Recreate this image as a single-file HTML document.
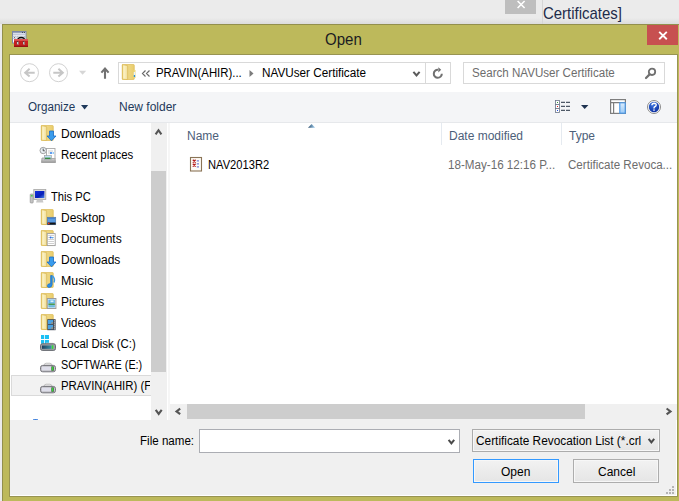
<!DOCTYPE html>
<html><head><meta charset="utf-8">
<style>
*{margin:0;padding:0;box-sizing:border-box}
html,body{width:679px;height:501px;overflow:hidden;background:#ebebeb;font-family:"Liberation Sans",sans-serif;font-size:12px;color:#000}
.a{position:absolute}
.t{position:absolute;white-space:nowrap;line-height:12px;font-size:12px}
</style></head><body>

<svg width="0" height="0" style="position:absolute">
<defs>
<linearGradient id="gFront" x1="0" y1="0" x2="1" y2="0"><stop offset="0" stop-color="#f2dc8c"/><stop offset="0.3" stop-color="#fbf2c6"/><stop offset="1" stop-color="#f1de98"/></linearGradient>
<linearGradient id="gBack" x1="0" y1="0" x2="1" y2="0"><stop offset="0" stop-color="#f4e09a"/><stop offset="1" stop-color="#e9cd6c"/></linearGradient>
<symbol id="fld" viewBox="0 0 16 16">
 <rect x="1.4" y="0.4" width="11.8" height="15.2" rx="0.8" fill="url(#gBack)" stroke="#e0c162" stroke-width="0.9"/>
 <path d="M1.4 0.6 L6.6 1.6 L6.6 15.6 L1.4 15.2 Z" fill="url(#gFront)" stroke="#dcbb58" stroke-width="0.8"/>
 <path d="M7.2 2 V15" stroke="#e6cf7e" stroke-width="0.8"/>
</symbol>
</defs></svg>
<!-- background window bits -->
<div class="a" style="left:0;top:18px;width:679px;height:6px;background:linear-gradient(#ebebeb,#dcdcdc)"></div>
<div class="a" style="left:505px;top:0;width:31px;height:14px;background:#bebebe"></div>
<div class="a" style="left:542px;top:0;width:1px;height:24px;background:#d6d6d6"></div>
<div class="t" style="transform:scaleX(0.88);transform-origin:0 0;left:543px;top:5px;font-size:17px;line-height:17px;color:#1e2c4a">Certificates]</div>

<!-- dialog frame -->
<div class="a" style="left:2px;top:24px;width:700px;height:500px;background:#bdb95b;border-left:1px solid #928f4c;border-top:1px solid #928f4c"></div>
<div class="t" style="left:325px;top:32px;font-size:16px;line-height:16px;color:#1b1b22;transform:scaleX(0.94);transform-origin:0 0">Open</div>
<div class="a" style="left:647px;top:25px;width:31px;height:20px;background:#c75050"></div>

<!-- content -->
<div class="a" style="left:9px;top:54px;width:669px;height:443px;border:1px solid #989452;background:#fff"></div>
<!-- nav bar -->
<div class="a" style="left:118px;top:62px;width:333px;height:22px;border:1px solid #d9d9d9"></div>
<div class="a" style="left:425px;top:62px;width:1px;height:22px;background:#d9d9d9"></div>
<div class="a" style="left:463px;top:62px;width:202px;height:22px;border:1px solid #d9d9d9"></div>
<div class="t" style="transform:scaleX(0.948);transform-origin:0 0;left:156px;top:67px;">PRAVIN(AHIR)...</div>
<div class="t" style="transform:scaleX(0.977);transform-origin:0 0;left:262px;top:67px;">NAVUser Certificate</div>
<div class="t" style="transform:scaleX(0.966);transform-origin:0 0;left:472px;top:67px;color:#6d6d6d">Search NAVUser Certificate</div>

<!-- toolbar -->
<div class="a" style="left:10px;top:92px;width:667px;height:31px;background:#f4f5f7;border-bottom:1px solid #e6e8eb"></div>
<div class="t" style="left:28px;top:101px;color:#1e395b;transform:scaleX(0.97);transform-origin:0 0">Organize</div>
<div class="t" style="left:119px;top:101px;color:#1e395b">New folder</div>

<!-- left pane -->
<div class="a" style="left:151px;top:123px;width:16px;height:297px;background:#f0f0f0"></div>
<div class="a" style="left:151px;top:171px;width:15px;height:201px;background:#cdcdcd"></div>
<div class="a" style="left:11px;top:375px;width:140px;height:21px;background:#f2f2f2;border:1px solid #dadada;border-right:none"></div>
<div class="t" style="left:61px;top:128px">Downloads</div>
<div class="t" style="transform:scaleX(0.95);transform-origin:0 0;left:61px;top:149px">Recent places</div>
<div class="t" style="transform:scaleX(0.93);transform-origin:0 0;left:51px;top:191px">This PC</div>
<div class="t" style="left:61px;top:212px">Desktop</div>
<div class="t" style="left:61px;top:233px">Documents</div>
<div class="t" style="left:61px;top:254px">Downloads</div>
<div class="t" style="transform:scaleX(1.03);transform-origin:0 0;left:61px;top:275px">Music</div>
<div class="t" style="left:61px;top:296px">Pictures</div>
<div class="t" style="transform:scaleX(0.96);transform-origin:0 0;left:61px;top:317px">Videos</div>
<div class="t" style="transform:scaleX(0.95);transform-origin:0 0;left:61px;top:338px">Local Disk (C:)</div>
<div class="t" style="transform:scaleX(0.9);transform-origin:0 0;left:61px;top:359px">SOFTWARE (E:)</div>
<div class="a" style="left:61px;top:376px;width:89px;height:20px;overflow:hidden"><div class="t" style="transform:scaleX(0.948);transform-origin:0 0;left:0;top:4px">PRAVIN(AHIR) (F:)</div></div>
<div class="a" style="left:168px;top:123px;width:2px;height:297px;background:#f6f6f6"></div>

<!-- right pane -->
<div class="t" style="left:187px;top:130px;color:#4c607a">Name</div>
<div class="t" style="left:449px;top:130px;color:#4c607a">Date modified</div>
<div class="t" style="left:569px;top:130px;color:#4c607a">Type</div>
<div class="a" style="left:441px;top:123px;width:1px;height:22px;background:#e5eaf0"></div>
<div class="a" style="left:561px;top:123px;width:1px;height:22px;background:#e5eaf0"></div>
<div class="t" style="transform:scaleX(0.93);transform-origin:0 0;left:208px;top:159px">NAV2013R2</div>
<div class="t" style="transform:scaleX(0.97);transform-origin:0 0;left:448px;top:159px;color:#6d6d6d">18-May-16 12:16 P...</div>
<div class="t" style="transform:scaleX(0.965);transform-origin:0 0;left:568px;top:159px;color:#6d6d6d">Certificate Revoca...</div>

<!-- h scrollbar -->
<div class="a" style="left:170px;top:404px;width:507px;height:16px;background:#f0f0f0"></div>
<div class="a" style="left:187px;top:404px;width:398px;height:15px;background:#cdcdcd"></div>

<!-- bottom panel -->
<div class="a" style="left:10px;top:420px;width:667px;height:76px;background:#f0f0f0;border-right:1px solid #fff;border-bottom:1px solid #fff"></div>
<div class="t" style="transform:scaleX(0.965);transform-origin:0 0;left:140px;top:435px">File name:</div>
<div class="a" style="left:199px;top:429px;width:261px;height:24px;background:#fff;border:1px solid #abadb3"></div>
<div class="a" style="left:472px;top:429px;width:188px;height:23px;background:linear-gradient(#f2f2f2,#e5e5e5);box-shadow:inset 0 0 0 1px #f7f7f7;border:1px solid #acacac"></div>
<div class="t" style="transform:scaleX(0.987);transform-origin:0 0;left:476px;top:435px">Certificate Revocation List (*.crl</div>
<div class="a" style="left:473px;top:459px;width:86px;height:24px;background:linear-gradient(#f2f2f2,#e5e5e5);box-shadow:inset 0 0 0 1px #f7f7f7;border:1px solid #3399ff"></div>
<div class="t" style="left:501px;top:466px">Open</div>
<div class="a" style="left:573px;top:459px;width:86px;height:24px;background:linear-gradient(#f2f2f2,#e5e5e5);box-shadow:inset 0 0 0 1px #f7f7f7;border:1px solid #adadad"></div>
<div class="t" style="left:598px;top:466px">Cancel</div>

<!-- ICONS -->
<!-- top gray X -->
<svg class="a" style="left:505px;top:0" width="31" height="14"><path d="M12.6 1 L19.6 8 M19.6 1 L12.6 8" stroke="#fff" stroke-width="1.6"/></svg>
<!-- title icon -->
<svg class="a" style="left:11px;top:30px" width="19" height="18">
 <rect x="1.5" y="1.5" width="13.5" height="11.5" fill="#f7f8fb" stroke="#7c88a6"/>
 <rect x="2" y="2" width="12.5" height="1.3" fill="#98a2bb"/>
 <rect x="11" y="2" width="1" height="1" fill="#444c60"/><rect x="13" y="2" width="1" height="1" fill="#444c60"/>
 <rect x="2" y="4.2" width="12.5" height="1" fill="#b6bed0"/>
 <rect x="2" y="6.2" width="3" height="2.3" fill="#fff" stroke="#a0a8bc" stroke-width="0.6"/>
 <rect x="3.2" y="7" width="0.8" height="0.8" fill="#222"/>
 <rect x="6.2" y="6.2" width="7.6" height="2.6" fill="#fff" stroke="#a0a8bc" stroke-width="0.6"/>
 <path d="M6.8 8.8 Q10.2 6.2 13.6 8.8" stroke="#0a0a0a" stroke-width="1.3" fill="none"/>
 <rect x="3" y="9" width="14" height="8" fill="#c81e1e"/>
 <rect x="3" y="9" width="14" height="1.8" fill="#de5656"/>
 <rect x="3" y="15.6" width="14" height="1.4" fill="#951212"/>
 <rect x="5.9" y="11.6" width="1.7" height="3" fill="#d4e2e4" stroke="#5a3030" stroke-width="0.4"/>
 <rect x="12" y="11.6" width="1.7" height="3" fill="#d4e2e4" stroke="#5a3030" stroke-width="0.4"/>
</svg>
<!-- close X -->
<svg class="a" style="left:647px;top:25px" width="31" height="20"><path d="M12.2 6.9 L19.8 14.3 M19.8 6.9 L12.2 14.3" stroke="#fff" stroke-width="1.9"/></svg>

<!-- nav buttons -->
<svg class="a" style="left:18px;top:61px" width="100" height="24">
 <circle cx="11.5" cy="11.7" r="9" fill="none" stroke="#d2d2d2" stroke-width="1"/>
 <path d="M7 11.7 H16.7 M11.6 7.8 L7.2 11.7 L11.6 15.6" fill="none" stroke="#c6c6c6" stroke-width="2"/>
 <circle cx="40.5" cy="11.7" r="9" fill="none" stroke="#d2d2d2" stroke-width="1"/>
 <path d="M35.3 11.7 H45 M40.4 7.8 L44.8 11.7 L40.4 15.6" fill="none" stroke="#c6c6c6" stroke-width="2"/>
 <path d="M61 9.8 H68.2 L64.6 13.8 Z" fill="#d6d6d6"/>
 <path d="M87 17.8 V7.4 M83.4 11.6 L87 7.6 L90.6 11.6" fill="none" stroke="#727272" stroke-width="2.1"/>
</svg>
<!-- address folder -->
<svg class="a" style="left:121px;top:64px" width="16" height="16"><use href="#fld"/><rect x="12.5" y="6" width="2" height="8" fill="#eed77c"/><rect x="12.8" y="8" width="1.3" height="4.6" fill="#e8f2f8"/><rect x="12.8" y="11" width="1.3" height="2" fill="#2c8fd8"/></svg>
<!-- << and > -->
<svg class="a" style="left:140px;top:68px" width="12" height="12"><path d="M5.5 2.5 L2.5 5.5 L5.5 8.5 M9.5 2.5 L6.5 5.5 L9.5 8.5" fill="none" stroke="#6a6a6a" stroke-width="1.2"/></svg>
<svg class="a" style="left:246.5px;top:68px" width="10" height="12"><path d="M2.5 2 L6.5 5.5 L2.5 9 Z" fill="#7c7c7c"/></svg>
<!-- address dropdown chevron -->
<svg class="a" style="left:411px;top:69px" width="12" height="10"><path d="M2.4 2.8 L5.5 6.4 L8.6 2.8" fill="none" stroke="#5a5a5a" stroke-width="2"/></svg>
<!-- refresh -->
<svg class="a" style="left:430px;top:65px" width="16" height="16">
 <path d="M11.8 8.8 A4 4 0 1 1 8 4.8" fill="none" stroke="#707070" stroke-width="2"/>
 <path d="M8.3 2.2 L11.2 4.8 L8.3 7.4 Z" fill="#707070"/>
</svg>
<!-- search -->
<svg class="a" style="left:642px;top:66px" width="16" height="16">
 <circle cx="10" cy="5.8" r="3.2" fill="none" stroke="#707070" stroke-width="1.8"/>
 <path d="M7.6 8.4 L4 12" stroke="#707070" stroke-width="2.2" stroke-linecap="round"/>
</svg>

<!-- toolbar -->
<svg class="a" style="left:80px;top:103px" width="10" height="8"><path d="M1 2 H8.2 L4.6 6.4 Z" fill="#1e395b"/></svg>
<svg class="a" style="left:554px;top:99px" width="36" height="16">
 <rect x="1.5" y="1.5" width="4" height="4" fill="#fff" stroke="#6b7688" stroke-width="0.8"/>
 <rect x="1.5" y="5.5" width="4" height="4" fill="#fff" stroke="#6b7688" stroke-width="0.8"/>
 <rect x="1.5" y="9.5" width="4" height="4" fill="#fff" stroke="#6b7688" stroke-width="0.8"/>
 <rect x="3" y="3" width="1" height="1" fill="#3a9a3a"/>
 <rect x="3" y="7" width="1" height="1" fill="#e02020"/>
 <rect x="3" y="11" width="1" height="1" fill="#2050e0"/>
 <path d="M7 3.4 H11 M12 3.4 H16 M7 7.4 H11 M12 7.4 H16 M7 11.4 H11 M12 11.4 H16" stroke="#4e5866" stroke-width="1.1"/>
 <path d="M27 6 H34.4 L30.7 10 Z" fill="#1e3250"/>
</svg>
<svg class="a" style="left:609px;top:98px" width="18" height="17">
 <rect x="1.6" y="1.6" width="14.8" height="13.8" fill="#fff" stroke="#7e7e7e" stroke-width="1.2"/>
 <path d="M1.6 4.6 H16.4 M4.6 4.6 V15.4" stroke="#7e7e7e" stroke-width="1.2"/>
 <linearGradient id="gPv" x1="0" y1="0" x2="0" y2="1"><stop offset="0" stop-color="#dcecfc"/><stop offset="1" stop-color="#9ccbf6"/></linearGradient>
 <rect x="10.8" y="4.8" width="5.4" height="10.4" fill="url(#gPv)" stroke="#4796e8" stroke-width="1.1"/>
</svg>
<svg class="a" style="left:646px;top:99px" width="16" height="16">
 <defs><radialGradient id="gHelp" cx="0.4" cy="0.3" r="0.8"><stop offset="0" stop-color="#3b74e0"/><stop offset="1" stop-color="#0a2a9a"/></radialGradient></defs>
 <circle cx="8" cy="8" r="6.5" fill="#fff" stroke="#8a8a8a" stroke-width="1"/>
 <circle cx="8" cy="8" r="5.2" fill="url(#gHelp)"/>
 <path d="M5.9 6.2 Q6 4.2 8.1 4.2 Q10.3 4.3 10.2 6 Q10.1 7.2 8.6 7.9 Q8 8.3 8 9.4" fill="none" stroke="#fff" stroke-width="1.4"/>
 <rect x="7.3" y="10.4" width="1.4" height="1.4" fill="#fff"/>
</svg>

<!-- left pane icons -->
<svg class="a" style="left:40px;top:125px" width="17" height="17"><use href="#fld" width="16" height="16"/>
 <path d="M9.5 6 H13.5 V11 H16 L11.5 15.8 L7 11 H9.5 Z" fill="#3a9cec" stroke="#1a6cc8" stroke-width="0.8"/></svg>
<svg class="a" style="left:39px;top:146px" width="18" height="17">
 <linearGradient id="gTray" x1="0" y1="0" x2="0" y2="1"><stop offset="0" stop-color="#dcdcdc"/><stop offset="1" stop-color="#9a9a9a"/></linearGradient>
 <path d="M3 12 H16 L16.5 16.5 H2.5 Z" fill="url(#gTray)" stroke="#8e8e8e" stroke-width="0.7"/>
 <rect x="7.5" y="2.5" width="8.5" height="10" fill="#fff" stroke="#a8a8a8" stroke-width="0.9"/>
 <path d="M9 5 H14 M9 7 H11" stroke="#c0c0c0" stroke-width="0.8"/>
 <circle cx="12" cy="7" r="1" fill="#2a7ae8"/><circle cx="14.2" cy="7" r="0.8" fill="#48a8f0"/>
 <rect x="5.3" y="9.5" width="7" height="4" fill="#bfe0f5" stroke="#999" stroke-width="0.6"/>
 <rect x="6" y="11.6" width="5.6" height="1.4" fill="#3a8a40"/>
 <circle cx="4.2" cy="4.5" r="3.2" fill="#e8eef2" stroke="#9a9a9a" stroke-width="0.9"/>
 <path d="M4.2 2.6 V4.8 H5.8" stroke="#333" stroke-width="0.8" fill="none"/>
</svg>
<svg class="a" style="left:29px;top:188px" width="18" height="16">
 <rect x="4.8" y="1.5" width="12" height="10" fill="#dcdcd8" stroke="#a6a6a6" stroke-width="0.8"/>
 <linearGradient id="gScr" x1="0" y1="0" x2="1" y2="1"><stop offset="0" stop-color="#1030e0"/><stop offset="0.6" stop-color="#0820b8"/><stop offset="1" stop-color="#4b86e8"/></linearGradient>
 <rect x="6" y="3" width="9.4" height="7" fill="url(#gScr)"/>
 <path d="M8 11.5 H13.5 L14.5 14.5 H7 Z" fill="#c8c8c8"/>
 <rect x="1.2" y="6" width="3" height="9" rx="0.8" fill="#c4c4c4" stroke="#8a8a8a" stroke-width="0.6"/>
 <rect x="1.8" y="7.2" width="1.8" height="1.2" fill="#2ed02e"/>
</svg>
<svg class="a" style="left:40px;top:209px" width="17" height="17"><use href="#fld" width="16" height="16"/>
 <rect x="7.3" y="8.3" width="8.4" height="7.4" fill="#3f7fd0" stroke="#587ca8" stroke-width="0.7"/>
 <rect x="7.8" y="9.8" width="7.5" height="3.2" fill="#5a9be0"/>
 <rect x="7.6" y="13.6" width="8" height="2" fill="#151515"/>
 <rect x="8" y="13.6" width="1.6" height="1.6" fill="#e84020"/>
</svg>
<svg class="a" style="left:40px;top:230px" width="17" height="17"><use href="#fld" width="16" height="16"/>
 <rect x="7.2" y="3.6" width="8" height="12" fill="#fff" stroke="#9c9c9c" stroke-width="0.9"/>
 <path d="M8.2 5.5 H14 M8.2 7.5 H14 M8.2 9.5 H14 M8.2 11.5 H14 M8.2 13.5 H14" stroke="#c4c4c4" stroke-width="0.8"/>
 <circle cx="10.6" cy="7.6" r="1" fill="#2a6ee8"/><circle cx="12.6" cy="7.7" r="0.8" fill="#4aa8f4"/>
</svg>
<svg class="a" style="left:40px;top:251px" width="17" height="17"><use href="#fld" width="16" height="16"/>
 <path d="M9.5 6 H13.5 V11 H16 L11.5 15.8 L7 11 H9.5 Z" fill="#3a9cec" stroke="#1a6cc8" stroke-width="0.8"/></svg>
<svg class="a" style="left:40px;top:272px" width="17" height="17"><use href="#fld" width="16" height="16"/>
 <path d="M12.2 3.5 V12.5 Q12 15.5 9 15.6 Q7 15.6 7.4 13.3 Q8 11.4 10.6 11.6 V3.5 Z" fill="#2a8ee8" stroke="#1a6ac0" stroke-width="0.6"/>
 <path d="M12.2 3.8 Q15.6 6.5 14 10.5" fill="none" stroke="#3a9ae8" stroke-width="1.4"/>
</svg>
<svg class="a" style="left:40px;top:293px" width="17" height="17"><use href="#fld" width="16" height="16"/>
 <rect x="7.3" y="5.5" width="8.6" height="10" fill="#f8f8f8" stroke="#9b9b9b" stroke-width="1"/>
 <rect x="8.3" y="6.5" width="6.6" height="4.2" fill="#62b2e8"/>
 <rect x="10.5" y="7.4" width="3" height="1.8" fill="#d8eef8"/>
 <rect x="8.3" y="10.5" width="6.6" height="1.6" fill="#4a9a50"/>
 <rect x="8.3" y="12.1" width="6.6" height="2.4" fill="#6cb8e0"/>
</svg>
<svg class="a" style="left:40px;top:314px" width="17" height="17"><use href="#fld" width="16" height="16"/>
 <rect x="7.3" y="5.2" width="8.3" height="11" fill="#3c4450"/>
 <rect x="8" y="6" width="5" height="4.2" fill="#4aa0e0"/>
 <rect x="8" y="11" width="5" height="4.2" fill="#4aa0e0"/>
 <rect x="11.5" y="8.5" width="1.2" height="1.2" fill="#e08020"/>
 <rect x="11.5" y="13.5" width="1.2" height="1.2" fill="#e08020"/>
 <path d="M14.4 6.4 V7.4 M14.4 8.4 V9.4 M14.4 10.4 V11.4 M14.4 12.4 V13.4 M14.4 14.4 V15.4" stroke="#f4f4f4" stroke-width="1"/>
</svg>
<svg class="a" style="left:38px;top:333px" width="20" height="19">
 <rect x="3" y="2" width="3.2" height="4" fill="#1cc0f4"/>
 <rect x="7" y="2" width="4" height="4" fill="#1cc0f4"/>
 <rect x="3" y="7" width="3.2" height="3.8" fill="#1cc0f4"/>
 <rect x="7" y="7" width="4" height="3.8" fill="#1cc0f4"/>
 <path d="M8 9.8 H15 L16.5 11 H8 Z" fill="#dcdcdc"/>
 <rect x="2.5" y="10.8" width="15" height="6.6" rx="1.8" fill="#9aa0a6" stroke="#5c6066" stroke-width="0.9"/>
 <linearGradient id="gLd" x1="0" y1="0" x2="1" y2="0"><stop offset="0" stop-color="#1c3e60"/><stop offset="1" stop-color="#3a92a6"/></linearGradient>
 <rect x="4" y="12.5" width="9.5" height="3.3" fill="url(#gLd)"/>
 <rect x="13.8" y="12.3" width="1.5" height="3.6" fill="#34e034"/>
</svg>
<svg class="a" style="left:38px;top:361px" width="20" height="12">
 <path d="M5.8 4.6 Q6.2 2.2 8.2 2.2 H11.8 Q13.8 2.2 14.2 4.6 Z" fill="#e4e4e4" stroke="#b0b0b0" stroke-width="0.7"/>
 <rect x="2.5" y="4.4" width="15" height="6.4" rx="2.2" fill="#c4c4ca" stroke="#6a6a70" stroke-width="0.9"/>
 <rect x="4" y="5.8" width="9.4" height="3.4" fill="#dedeea"/>
 <rect x="13.4" y="5.4" width="2.4" height="4.4" fill="#4a4a4a"/>
 <rect x="13.8" y="5.7" width="1.5" height="3.8" fill="#30dd30"/>
</svg>
<svg class="a" style="left:38px;top:382px" width="20" height="12">
 <path d="M5.8 4.6 Q6.2 2.2 8.2 2.2 H11.8 Q13.8 2.2 14.2 4.6 Z" fill="#e4e4e4" stroke="#b0b0b0" stroke-width="0.7"/>
 <rect x="2.5" y="4.4" width="15" height="6.4" rx="2.2" fill="#c4c4ca" stroke="#6a6a70" stroke-width="0.9"/>
 <rect x="4" y="5.8" width="9.4" height="3.4" fill="#dedeea"/>
 <rect x="13.4" y="5.4" width="2.4" height="4.4" fill="#4a4a4a"/>
 <rect x="13.8" y="5.7" width="1.5" height="3.8" fill="#30dd30"/>
</svg>
<div class="a" style="left:33px;top:419px;width:5px;height:1px;background:linear-gradient(90deg,#7a9ee6,#3a84dc,#7a9ee6)"></div>

<!-- scrollbar chevrons -->
<svg class="a" style="left:151px;top:125px" width="16" height="12"><path d="M4.6 9.3 L7.5 5.2 L10.4 9.3" fill="none" stroke="#555" stroke-width="2.1"/></svg>
<svg class="a" style="left:151px;top:405px" width="16" height="12"><path d="M4.7 4.8 L7.7 8.9 L10.7 4.8" fill="none" stroke="#555" stroke-width="2.1"/></svg>
<svg class="a" style="left:170px;top:404px" width="16" height="16"><path d="M10.2 4.6 L6.5 7.4 L10.2 10.2" fill="none" stroke="#555" stroke-width="2.1"/></svg>
<svg class="a" style="left:660px;top:404px" width="16" height="16"><path d="M6.6 4.5 L10.5 7.4 L6.6 10.3" fill="none" stroke="#555" stroke-width="2.1"/></svg>

<!-- sort arrow -->
<svg class="a" style="left:306px;top:122px" width="12" height="8"><linearGradient id="gSort" x1="0" y1="0" x2="1" y2="0"><stop offset="0" stop-color="#2a4a6a"/><stop offset="1" stop-color="#a8d8f8"/></linearGradient><path d="M2 5.8 L5.6 2 L9.2 5.8 Z" fill="url(#gSort)"/></svg>
<!-- file icon -->
<svg class="a" style="left:189px;top:156px" width="14" height="16">
 <rect x="1.5" y="1.5" width="11" height="13.5" fill="#fdfbf6" stroke="#8a7456" stroke-width="1.1"/>
 <path d="M3.8 3.8 L6.6 6.6 M6.6 3.8 L3.8 6.6 M3.8 7.8 L6.6 10.6 M6.6 7.8 L3.8 10.6" stroke="#b41818" stroke-width="1.3"/>
 <path d="M7.8 4.8 H10 M7.8 7.8 H10 M7.8 10.8 H10" stroke="#7484d4" stroke-width="1.2"/>
</svg>

<!-- bottom chevrons -->
<svg class="a" style="left:446px;top:437px" width="12" height="10"><path d="M2.6 2.8 L5.4 6.3 L8.2 2.8" fill="none" stroke="#4a4a4a" stroke-width="2"/></svg>
<svg class="a" style="left:646px;top:436px" width="12" height="10"><path d="M2.6 2.8 L5.4 6.3 L8.2 2.8" fill="none" stroke="#4a4a4a" stroke-width="2"/></svg>
<!-- grip -->
<svg class="a" style="left:664px;top:484px" width="12" height="12"><g fill="#b4b4b4"><rect x="8" y="2" width="2" height="2"/><rect x="5" y="5" width="2" height="2"/><rect x="8" y="5" width="2" height="2"/><rect x="2" y="8" width="2" height="2"/><rect x="5" y="8" width="2" height="2"/><rect x="8" y="8" width="2" height="2"/></g></svg>
</body></html>
